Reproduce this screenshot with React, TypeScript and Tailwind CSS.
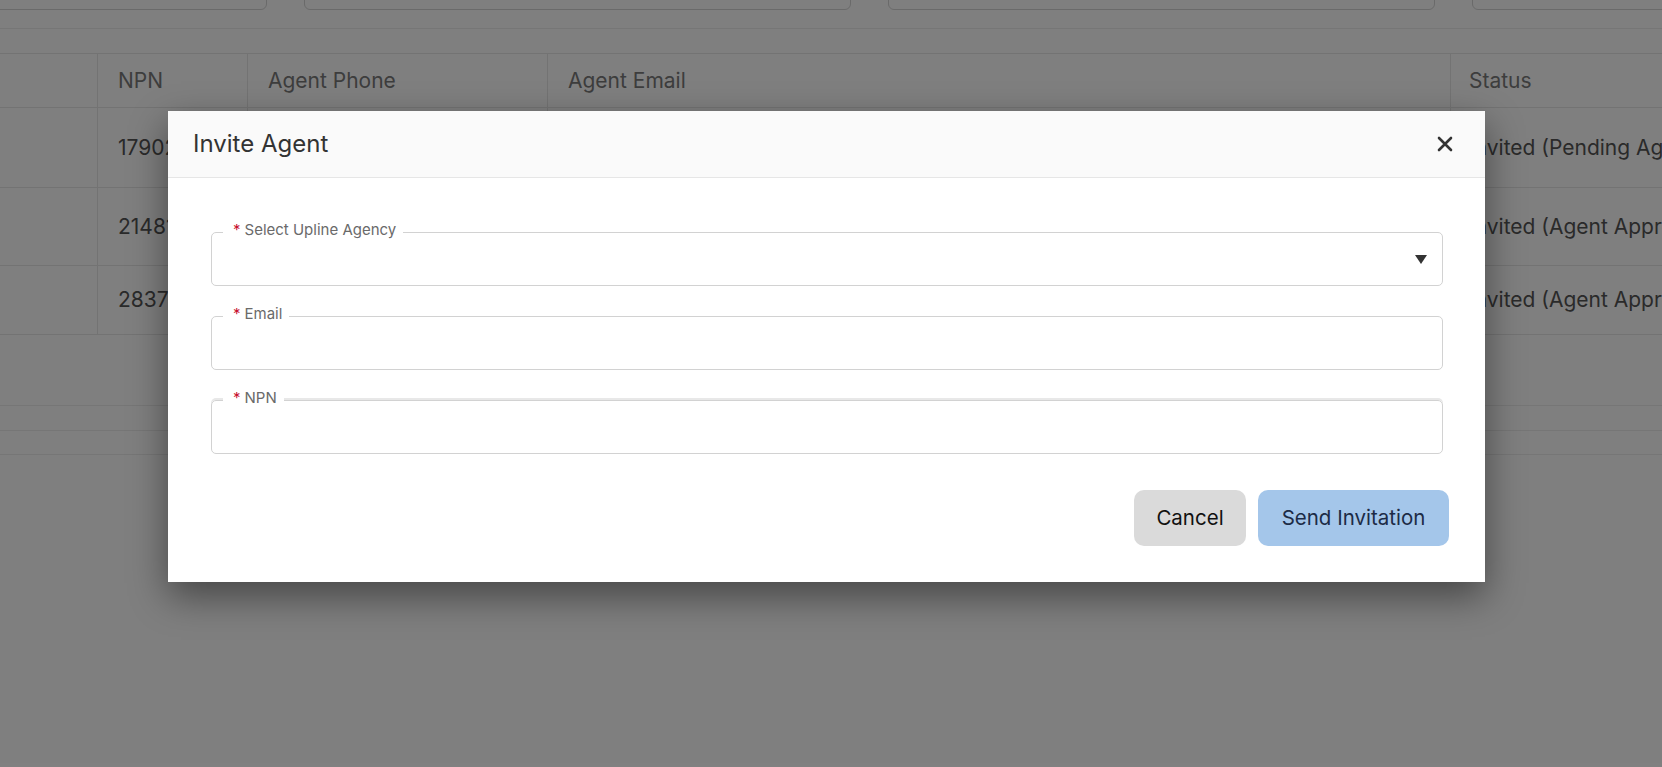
import React from "react";

const rows = [
  { npn: "17902345", phone: "(555) 201-3345", email: "agent.one@example.com", status: "Invited (Pending Agent Approval)", h: "h-[80px]" },
  { npn: "21481190", phone: "(555) 348-7781", email: "agent.two@example.com", status: "Invited (Agent Approved)", h: "h-[78px]" },
  { npn: "28371456", phone: "(555) 612-0934", email: "agent.three@example.com", status: "Invited (Agent Approved)", h: "h-[69px]" },
];

function Field({ label, select }: { label: string; select?: boolean }) {
  return (
    <div className="relative h-[54px] rounded-[5px] border border-[#d2d2d2] bg-white">
      <div className="absolute -top-[12px] left-[11px] flex items-center bg-white pl-[10px] pr-[7px] text-[15px] leading-[18px] text-[#6a6a6a]">
        <span className="mr-[4px] text-[#c8102e]">*</span>
        <span>{label}</span>
      </div>
      {select && (
        <svg className="absolute right-[15px] top-[22px]" width="12" height="9" viewBox="0 0 12 9">
          <polygon points="0,0 12,0 6,9" fill="#333" />
        </svg>
      )}
    </div>
  );
}

export default function App() {
  return (
    <div className="relative h-[767px] w-[1662px] overflow-hidden bg-white font-['Inter','Liberation_Sans',sans-serif]">
      {/* Background page */}
      <div className="flex flex-col">
        <div className="-mt-[40px] -ml-[280px] flex gap-[37px]">
          <div className="h-[50px] w-[547px] shrink-0 rounded-[6px] border border-[#d4d4d4]" />
          <div className="h-[50px] w-[547px] shrink-0 rounded-[6px] border border-[#d4d4d4]" />
          <div className="h-[50px] w-[547px] shrink-0 rounded-[6px] border border-[#d4d4d4]" />
          <div className="h-[50px] w-[547px] shrink-0 rounded-[6px] border border-[#d4d4d4]" />
        </div>
        <div className="h-[18px]" />
        <div className="h-[25px] border-t border-[#ececec]" />
        <div className="border-t border-[#e6e6e6]">
          <div className="flex h-[54px] border-b border-[#e6e6e6] text-[21px] text-[#7a7a7a]">
            <div className="w-[98px] shrink-0 border-r border-[#e6e6e6]" />
            <div className="flex w-[150px] shrink-0 items-center border-r border-[#e6e6e6] pl-[20px]">NPN</div>
            <div className="flex w-[300px] shrink-0 items-center border-r border-[#e6e6e6] pl-[20px]">Agent Phone</div>
            <div className="flex w-[903px] shrink-0 items-center border-r border-[#e6e6e6] pl-[20px]">Agent Email</div>
            <div className="flex flex-1 items-center pl-[18px]">Status</div>
          </div>
          {rows.map((r) => (
            <div key={r.npn} className={`flex ${r.h} border-b border-[#e6e6e6] text-[21px] text-[#555]`}>
              <div className="w-[98px] shrink-0 border-r border-[#e6e6e6]" />
              <div className="flex w-[150px] shrink-0 items-center border-r border-[#e6e6e6] pl-[20px]">{r.npn}</div>
              <div className="flex w-[300px] shrink-0 items-center border-r border-[#e6e6e6] pl-[20px]">{r.phone}</div>
              <div className="flex w-[903px] shrink-0 items-center border-r border-[#e6e6e6] pl-[20px]">{r.email}</div>
              <div className="flex flex-1 items-center whitespace-nowrap pl-[18px]">{r.status}</div>
            </div>
          ))}
        </div>
        <div className="h-[70px]" />
        <div className="h-[25px] border-t border-[#ececec]" />
        <div className="h-[24px] border-t border-[#ececec]" />
        <div className="border-t border-[#ececec]" />
      </div>

      {/* Overlay */}
      <div className="absolute inset-0 bg-black/50" />

      {/* Modal */}
      <div className="absolute left-[168px] top-[111px] w-[1317px] bg-white shadow-[0_14px_36px_rgba(0,0,0,0.45)]">
        <div className="flex h-[67px] items-center justify-between border-b border-[#e6e6e6] bg-[#fafafa] pl-[25px] pr-[32px]">
          <span className="text-[24px] text-[#333]">Invite Agent</span>
          <svg width="16" height="16" viewBox="0 0 16 16">
            <path d="M2 2 L14 14 M14 2 L2 14" stroke="#333" strokeWidth="2.6" strokeLinecap="round" />
          </svg>
        </div>
        <div className="flex flex-col pb-[36px] pl-[43px] pr-[42px] pt-[54px]">
          <div className="flex flex-col gap-[30px]">
            <Field label="Select Upline Agency" select />
            <Field label="Email" />
            <div className="rounded-[5px] shadow-[0_-2px_0_#e8e8e8]">
              <Field label="NPN" />
            </div>
          </div>
          <div className="-mr-[6px] mt-[36px] flex justify-end gap-[12px]">
            <button className="h-[56px] w-[112px] rounded-[10px] bg-[#dadada] text-[20.5px] text-[#111]">Cancel</button>
            <button className="h-[56px] w-[191px] rounded-[10px] bg-[#a4c6ea] text-[20.5px] text-[#1c2b46]">Send Invitation</button>
          </div>
        </div>
      </div>
    </div>
  );
}
